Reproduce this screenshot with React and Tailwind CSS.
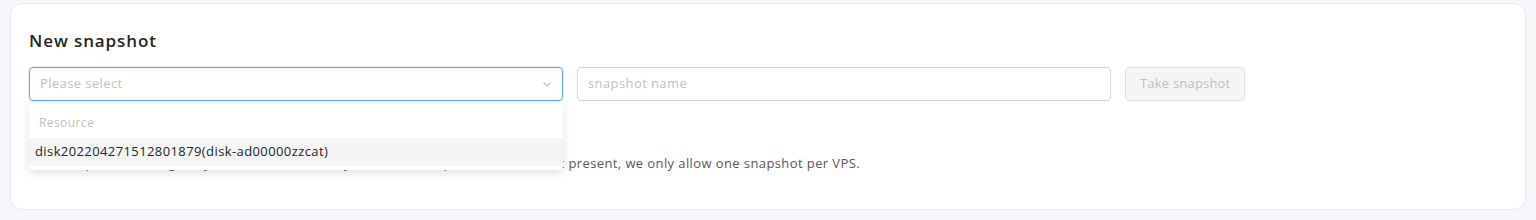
import React from "react";

const font = { fontFamily: '"Open Sans", "Noto Sans", sans-serif' };

const App = () => {
  return (
    <main className="h-[220px] w-full bg-[#f5f7fa] px-[10px] pt-[3px] tracking-[0.4px]" style={font}>
      <section className="relative h-[207px] rounded-[12px] border border-[#e6e9ee] bg-white px-[18px] pt-[26px]">
        <h2 className="text-[17px] font-semibold leading-[22px] tracking-[0.9px] text-[#262626]">New snapshot</h2>

        <div className="mt-[15px] flex items-center gap-[14px]">
          <div className="flex h-[34px] w-[534px] items-center justify-between rounded-[4px] border border-[#69a3f0] pl-[10px] pr-[9px] shadow-[0_0_0_1px_rgba(105,163,240,0.15)]">
            <span className="text-[13px] text-[#bfbfbf]">Please select</span>
            <svg width="12" height="12" viewBox="0 0 12 12" fill="none" stroke="#bfbfbf" strokeWidth="1.1">
              <path d="M2.5 4.5 6 8l3.5-3.5" />
            </svg>
          </div>
          <div className="flex h-[34px] w-[534px] items-center rounded-[4px] border border-[#d9d9d9] px-[10px]">
            <span className="text-[13px] text-[#bfbfbf]">snapshot name</span>
          </div>
          <button className="h-[34px] rounded-[4px] border border-[#e0e0e0] bg-[#f5f5f5] px-[14px] text-[13px] tracking-[0.2px] text-[#bfbfbf]">
            Take snapshot
          </button>
        </div>

        <p className="mt-[53px] text-[13px] leading-[18px] text-[#595959]">
          Each snapshot is charged by its disk size, and only one can be kept for each disk. At present, we only allow one snapshot per VPS.
        </p>

        <div className="absolute left-[18px] top-[100px] w-[534px] rounded-[4px] bg-white py-[4px] shadow-[0_3px_10px_rgba(0,0,0,0.12)]">
          <div className="flex h-[30px] items-center px-[10px] text-[12px] text-[#bfbfbf]">Resource</div>
          <div className="flex h-[28px] items-center bg-[#f5f5f5] px-[6px] text-[13px] text-[#262626]">
            disk202204271512801879(disk-ad00000zzcat)
          </div>
        </div>
      </section>
    </main>
  );
};

export default App;
